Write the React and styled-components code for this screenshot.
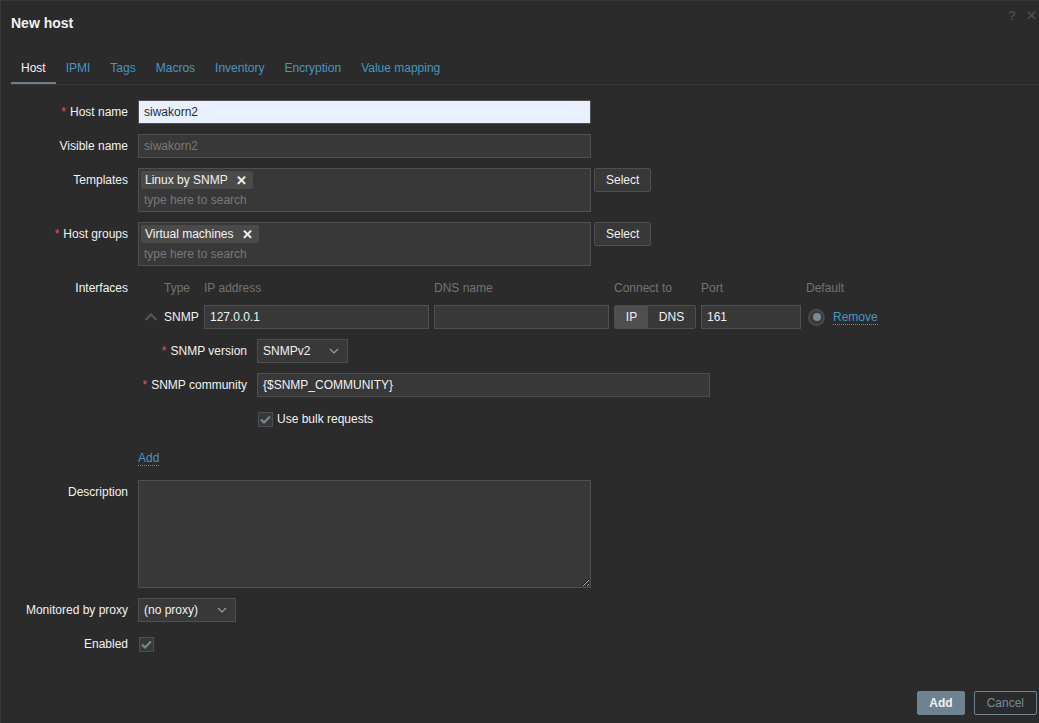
import styled, { createGlobalStyle } from "styled-components";

const GlobalStyle = createGlobalStyle`
  html, body {
    margin: 0;
    padding: 0;
    background: #2b2b2b;
  }
  body {
    font-family: "Liberation Sans", Arial, sans-serif;
    font-size: 12px;
    color: #f2f2f2;
  }
  * {
    box-sizing: border-box;
  }
`;

const Modal = styled.div`
  height: 100vh;
  display: flex;
  flex-direction: column;
  background: #2b2b2b;
  border-top: 1px solid #383838;
  border-left: 1px solid #383838;
`;

const Header = styled.div`
  height: 51px;
  display: flex;
  align-items: flex-start;
  justify-content: space-between;
  padding: 0 0 0 10px;
`;

const Title = styled.h4`
  margin: 0;
  line-height: 44px;
  font-size: 14px;
  font-weight: bold;
  color: #f2f2f2;
`;

const HeaderIcons = styled.div`
  display: flex;
  gap: 10px;
  padding: 7px 2px 0 0;
  color: #4a4a4a;
  font-size: 13px;
  font-weight: bold;
`;

const TabList = styled.div`
  display: flex;
  margin: 0 0 0 10px;
  border-bottom: 1px solid #383838;
`;

const Tab = styled.a`
  padding: 8px 10px 6px;
  line-height: 16px;
  border-bottom: 2px solid ${(p) => (p.$active ? "#6d8391" : "transparent")};
  color: ${(p) => (p.$active ? "#f2f2f2" : "#4796c4")};
  cursor: pointer;
`;

const Body = styled.div`
  flex: 1;
  padding-top: 15px;
`;

const Form = styled.div`
  display: grid;
  grid-template-columns: 127px 1fr;
  column-gap: 10px;
  row-gap: 10px;
`;

const Label = styled.label`
  text-align: right;
  line-height: 24px;
  white-space: nowrap;
  color: #f2f2f2;
`;

const Star = styled.span`
  color: #e45959;
  margin-right: 4px;
`;

const Field = styled.div`
  display: flex;
  align-items: flex-start;
  gap: 3px;
  min-width: 0;
`;

const Input = styled.input`
  width: ${(p) => p.$w || 453}px;
  height: 24px;
  padding: 0 5px;
  background: ${(p) => (p.$autofill ? "#e8f0fe" : "#383838")};
  border: 1px solid #4f4f4f;
  color: ${(p) => (p.$autofill ? "#1f2c33" : "#f2f2f2")};
  font: inherit;
  outline: none;
  &::placeholder {
    color: #787878;
  }
`;

const MultiSelect = styled.div`
  width: 453px;
  height: 44px;
  background: #383838;
  border: 1px solid #4f4f4f;
  padding: 2px 2px 0;
`;

const Chip = styled.span`
  display: inline-flex;
  align-items: center;
  gap: 8px;
  height: 18px;
  padding: 0 6px 0 4px;
  background: #4a4a4a;
  color: #f2f2f2;
  border-radius: 2px;
`;

const ChipX = styled.span`
  font-weight: bold;
  font-size: 13px;
  line-height: 1;
`;

const Placeholder = styled.div`
  color: #787878;
  padding: 1px 0 0 3px;
  line-height: 20px;
`;

const Button = styled.button`
  height: 24px;
  padding: 0 11px;
  background: #383838;
  border: 1px solid #4f4f4f;
  border-radius: 2px;
  color: #f2f2f2;
  font: inherit;
`;

const Interfaces = styled.div`
  display: grid;
  grid-template-columns: 21px 35px 225px 175px 82px 100px auto;
  column-gap: 5px;
  align-items: center;
`;

const ColHead = styled.div`
  grid-column: ${(p) => p.$col};
  color: #737373;
  line-height: 24px;
  margin-bottom: 5px;
`;

const Chevron = styled.div`
  display: flex;
  justify-content: center;
  padding-left: 4px;
`;

const TypeName = styled.div`
  color: #f2f2f2;
`;

const Toggle = styled.div`
  display: flex;
  height: 24px;
  border: 1px solid #4f4f4f;
  border-radius: 2px;
  overflow: hidden;
`;

const ToggleItem = styled.div`
  flex: ${(p) => (p.$active ? "0 0 33px" : "1")};
  display: flex;
  align-items: center;
  justify-content: center;
  background: ${(p) => (p.$active ? "#4f4f4f" : "#383838")};
  color: #f2f2f2;
`;

const DefaultCell = styled.div`
  display: flex;
  align-items: center;
  gap: 8px;
  padding-left: 2px;
`;

const Radio = styled.span`
  width: 17px;
  height: 17px;
  border-radius: 50%;
  border: 2px solid #4a4a4a;
  background: #383838;
  display: flex;
  align-items: center;
  justify-content: center;
  &::after {
    content: "";
    width: 8px;
    height: 8px;
    border-radius: 50%;
    background: #768d99;
  }
`;

const LinkText = styled.a`
  color: #4796c4;
  border-bottom: 1px dotted #4796c4;
  line-height: 14px;
  cursor: pointer;
`;

const Details = styled.div`
  grid-column: 1 / -1;
  display: grid;
  grid-template-columns: 109px 1fr;
  column-gap: 10px;
  row-gap: 10px;
  margin-top: 10px;
`;

const SelectBox = styled.div`
  width: ${(p) => p.$w}px;
  height: 24px;
  display: flex;
  align-items: center;
  justify-content: space-between;
  padding: 0 8px 0 5px;
  background: #383838;
  border: 1px solid #4f4f4f;
  color: #f2f2f2;
`;

const CheckRow = styled.label`
  display: flex;
  align-items: center;
  gap: 4px;
  height: 24px;
  color: #f2f2f2;
`;

const Checkbox = styled.span`
  width: 15px;
  height: 15px;
  margin-left: 1px;
  background: #383838;
  border: 1px solid #4f4f4f;
  display: flex;
  align-items: center;
  justify-content: center;
`;

const AddRow = styled.div`
  padding: 20px 0 5px;
  line-height: 14px;
`;

const TextArea = styled.textarea`
  width: 453px;
  height: 108px;
  background: #383838;
  border: 1px solid #4f4f4f;
  color: #f2f2f2;
  font: inherit;
  outline: none;
  display: block;
`;

const Footer = styled.div`
  display: flex;
  justify-content: flex-end;
  gap: 9px;
  padding: 0 2px 8px 0;
`;

const PrimaryButton = styled.button`
  height: 24px;
  padding: 0 11px;
  background: #6d8391;
  border: 1px solid #6d8391;
  border-radius: 2px;
  color: #f2f2f2;
  font: inherit;
  font-weight: bold;
`;

const OutlineButton = styled.button`
  height: 24px;
  padding: 0 12px;
  background: transparent;
  border: 1px solid #6d8391;
  border-radius: 2px;
  color: #768d99;
  font: inherit;
`;

const DownArrow = () => (
  <svg width="10" height="6" viewBox="0 0 10 6" fill="none">
    <path d="M1 1l4 4 4-4" stroke="#a0a0a0" strokeWidth="1.2" />
  </svg>
);

const Check = () => (
  <svg width="11" height="9" viewBox="0 0 11 9" fill="none">
    <path d="M1 4.5l3 3 6-6" stroke="#768d99" strokeWidth="2" />
  </svg>
);

const tabs = ["Host", "IPMI", "Tags", "Macros", "Inventory", "Encryption", "Value mapping"];

export default function App() {
  return (
    <>
      <GlobalStyle />
      <Modal>
        <Header>
          <Title>New host</Title>
          <HeaderIcons>
            <span>?</span>
            <span>✕</span>
          </HeaderIcons>
        </Header>
        <TabList>
          {tabs.map((t, i) => (
            <Tab key={t} $active={i === 0}>
              {t}
            </Tab>
          ))}
        </TabList>
        <Body>
          <Form>
            <Label>
              <Star>*</Star>Host name
            </Label>
            <Field>
              <Input $autofill defaultValue="siwakorn2" />
            </Field>

            <Label>Visible name</Label>
            <Field>
              <Input placeholder="siwakorn2" />
            </Field>

            <Label>Templates</Label>
            <Field>
              <MultiSelect>
                <Chip>
                  Linux by SNMP <ChipX>✕</ChipX>
                </Chip>
                <Placeholder>type here to search</Placeholder>
              </MultiSelect>
              <Button>Select</Button>
            </Field>

            <Label>
              <Star>*</Star>Host groups
            </Label>
            <Field>
              <MultiSelect>
                <Chip>
                  Virtual machines <ChipX>✕</ChipX>
                </Chip>
                <Placeholder>type here to search</Placeholder>
              </MultiSelect>
              <Button>Select</Button>
            </Field>

            <Label>Interfaces</Label>
            <div>
              <Interfaces>
                <ColHead $col={2}>Type</ColHead>
                <ColHead $col={3}>IP address</ColHead>
                <ColHead $col={4}>DNS name</ColHead>
                <ColHead $col={5}>Connect to</ColHead>
                <ColHead $col={6}>Port</ColHead>
                <ColHead $col={7}>Default</ColHead>

                <Chevron>
                  <svg width="14" height="8" viewBox="0 0 14 8" fill="none">
                    <path d="M1.5 7l5.5-5.5 5.5 5.5" stroke="#555" strokeWidth="2.2" />
                  </svg>
                </Chevron>
                <TypeName>SNMP</TypeName>
                <Input $w={225} defaultValue="127.0.0.1" />
                <Input $w={175} />
                <Toggle>
                  <ToggleItem $active>IP</ToggleItem>
                  <ToggleItem>DNS</ToggleItem>
                </Toggle>
                <Input $w={100} defaultValue="161" />
                <DefaultCell>
                  <Radio />
                  <LinkText>Remove</LinkText>
                </DefaultCell>

                <Details>
                  <Label>
                    <Star>*</Star>SNMP version
                  </Label>
                  <Field>
                    <SelectBox $w={91}>
                      SNMPv2 <DownArrow />
                    </SelectBox>
                  </Field>
                  <Label>
                    <Star>*</Star>SNMP community
                  </Label>
                  <Field>
                    <Input $w={453} defaultValue="{$SNMP_COMMUNITY}" />
                  </Field>
                  <span />
                  <CheckRow>
                    <Checkbox>
                      <Check />
                    </Checkbox>
                    Use bulk requests
                  </CheckRow>
                </Details>
              </Interfaces>
              <AddRow>
                <LinkText>Add</LinkText>
              </AddRow>
            </div>

            <Label>Description</Label>
            <Field>
              <TextArea />
            </Field>

            <Label>Monitored by proxy</Label>
            <Field>
              <SelectBox $w={98}>
                (no proxy) <DownArrow />
              </SelectBox>
            </Field>

            <Label>Enabled</Label>
            <Field>
              <CheckRow>
                <Checkbox>
                  <Check />
                </Checkbox>
              </CheckRow>
            </Field>
          </Form>
        </Body>
        <Footer>
          <PrimaryButton>Add</PrimaryButton>
          <OutlineButton>Cancel</OutlineButton>
        </Footer>
      </Modal>
    </>
  );
}
